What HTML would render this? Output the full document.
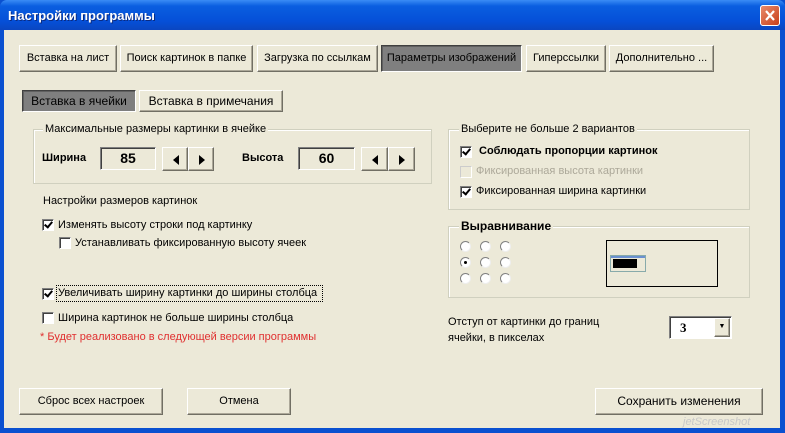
<!DOCTYPE html>
<html><head><meta charset="utf-8"><style>
*{box-sizing:border-box;margin:0;padding:0}
body{width:785px;height:433px;overflow:hidden;background:#0a50d0;font-family:"Liberation Sans","DejaVu Sans",sans-serif;font-size:11px;color:#000;position:relative}
.a{position:absolute;white-space:nowrap}
#title{left:0;top:0;width:785px;height:30px;background:linear-gradient(#3a8cf5 0%,#0a5ee0 20%,#0550d8 70%,#0a46c0 100%);border-radius:7px 7px 0 0}
#client{left:4px;top:30px;width:776px;height:398px;background:#ece9d8}
.btn{position:absolute;background:#ece9d8;border:1px solid;border-color:#fff #716f64 #716f64 #fff;box-shadow:inset -1px -1px 0 #aca899;text-align:center;font-size:11px}
.pr{background:#7f7f7f;border-color:#404040 #fff #fff #404040;box-shadow:inset 1px 1px 0 #606060}
.fr{position:absolute;border:1px solid #d0d0bf;box-shadow:1px 1px 0 #fff inset}
.cb{position:absolute;width:12px;height:12px;background:#fff;border:1px solid;border-color:#808080 #fff #fff #808080;box-shadow:inset 1px 1px 0 #404040}
.cb.k::after{content:"";position:absolute;left:3px;top:0px;width:3px;height:6px;border:solid #000;border-width:0 2px 2px 0;transform:rotate(40deg)}
.rd{position:absolute;width:11px;height:11px;border-radius:50%;background:#fff;border:1px solid;border-color:#808080 #eee #eee #808080}
.box{position:absolute;background:#ece9d8;border:1px solid;border-color:#808080 #fff #fff #808080;box-shadow:inset 1px 1px 0 #404040;font-weight:bold;font-size:14px;text-align:center;line-height:20px}
.tl,.tr{position:absolute;top:7px;width:0;height:0;border-top:5px solid transparent;border-bottom:5px solid transparent}
.tl{left:10px;border-right:6px solid #000}
.tr{left:10px;border-left:6px solid #000}
</style></head><body>
<div class="a" id="title"></div>
<div class="a" style="left:8px;top:8px;color:#fff;font-size:13px;font-weight:bold;text-shadow:1px 1px 0 #0a2a80">Настройки программы</div>
<div class="a" style="left:760px;top:5px;width:20px;height:21px;border:1px solid #fff;border-radius:3px;background:linear-gradient(135deg,#e88a6a,#c8401c)"><svg width="18" height="19" viewBox="0 0 18 19"><path d="M5 5L13 14M13 5L5 14" stroke="#fff" stroke-width="2.2"/></svg></div>
<div class="a" id="client"></div>

<div class="btn" style="left:19px;top:45px;width:98px;height:27px;line-height:25px">Вставка на лист</div>
<div class="btn" style="left:120px;top:45px;width:133px;height:27px;line-height:25px">Поиск картинок в папке</div>
<div class="btn" style="left:257px;top:45px;width:121px;height:27px;line-height:25px">Загрузка по ссылкам</div>
<div class="btn pr" style="left:381px;top:45px;width:141px;height:27px;line-height:25px">Параметры изображений</div>
<div class="btn" style="left:526px;top:45px;width:80px;height:27px;line-height:25px">Гиперссылки</div>
<div class="btn" style="left:609px;top:45px;width:105px;height:27px;line-height:25px">Дополнительно ...</div>

<div class="btn pr" style="left:22px;top:90px;width:114px;height:22px;line-height:20px;font-size:12px">Вставка в ячейки</div>
<div class="btn" style="left:139px;top:90px;width:144px;height:22px;line-height:20px;font-size:12px">Вставка в примечания</div>

<div class="fr" style="left:33px;top:129px;width:399px;height:55px"></div>
<div class="a" style="left:43px;top:123px;background:#ece9d8;padding:0 2px">Максимальные размеры картинки в ячейке</div>
<div class="a" style="left:42px;top:152px;font-weight:bold">Ширина</div>
<div class="box" style="left:100px;top:147px;width:56px;height:23px">85</div>
<div class="btn" style="left:162px;top:147px;width:26px;height:24px"><div class="tl"></div></div>
<div class="btn" style="left:188px;top:147px;width:26px;height:24px"><div class="tr"></div></div>
<div class="a" style="left:242px;top:152px;font-weight:bold">Высота</div>
<div class="box" style="left:298px;top:147px;width:57px;height:23px">60</div>
<div class="btn" style="left:361px;top:147px;width:27px;height:24px"><div class="tl"></div></div>
<div class="btn" style="left:388px;top:147px;width:27px;height:24px"><div class="tr"></div></div>

<div class="a" style="left:43px;top:195px">Настройки размеров картинок</div>
<div class="cb k" style="left:42px;top:219px"></div>
<div class="a" style="left:58px;top:219px">Изменять высоту строки под картинку</div>
<div class="cb" style="left:59px;top:237px"></div>
<div class="a" style="left:75px;top:237px">Устанавливать фиксированную высоту ячеек</div>
<div class="cb k" style="left:42px;top:288px"></div>
<div class="a" style="left:56px;top:285px;width:267px;height:17px;border:1px dotted #000;padding:1px 0 0 1px">Увеличивать ширину картинки до ширины столбца</div>
<div class="cb" style="left:42px;top:312px"></div>
<div class="a" style="left:58px;top:312px">Ширина картинок не больше ширины столбца</div>
<div class="a" style="left:40px;top:331px;color:#e03030">* Будет реализовано в следующей версии программы</div>

<div class="fr" style="left:448px;top:129px;width:302px;height:81px"></div>
<div class="a" style="left:459px;top:123px;background:#ece9d8;padding:0 2px">Выберите не больше 2 вариантов</div>
<div class="cb k" style="left:460px;top:146px"></div>
<div class="a" style="left:479px;top:145px;font-weight:bold">Соблюдать пропорции картинок</div>
<div class="cb" style="left:460px;top:166px;background:#ece9d8;box-shadow:none;border-color:#ccc #fff #fff #ccc"></div>
<div class="a" style="left:476px;top:165px;color:#aca899">Фиксированная высота картинки</div>
<div class="cb k" style="left:460px;top:186px"></div>
<div class="a" style="left:476px;top:185px">Фиксированная ширина картинки</div>

<div class="fr" style="left:448px;top:226px;width:302px;height:72px"></div>
<div class="a" style="left:459px;top:219px;background:#ece9d8;padding:0 2px;font-weight:bold;font-size:12px">Выравнивание</div>
<div class="rd" style="left:460px;top:241px"></div><div class="rd" style="left:480px;top:241px"></div><div class="rd" style="left:500px;top:241px"></div>
<div class="rd" style="left:460px;top:257px"><div style="position:absolute;left:3px;top:3px;width:3px;height:3px;background:#000;border-radius:50%"></div></div><div class="rd" style="left:480px;top:257px"></div><div class="rd" style="left:500px;top:257px"></div>
<div class="rd" style="left:460px;top:273px"></div><div class="rd" style="left:480px;top:273px"></div><div class="rd" style="left:500px;top:273px"></div>
<div class="a" style="left:606px;top:240px;width:112px;height:47px;border:1px solid #000"></div>
<div class="a" style="left:610px;top:255px;width:36px;height:17px;border:1px solid #8aa;background:#ece9d8"><div style="position:absolute;left:2px;top:3px;width:24px;height:9px;background:#000"></div><div style="position:absolute;left:0;top:0;width:34px;height:2px;background:#6a90d0"></div></div>

<div class="a" style="left:448px;top:314px;line-height:16px">Отступ от картинки до границ<br>ячейки, в пикселах</div>
<div class="a" style="left:669px;top:316px;width:63px;height:23px;background:#fff;border:1px solid;border-color:#808080 #fff #fff #808080;box-shadow:inset 1px 1px 0 #404040"><span style="position:absolute;left:10px;top:3px;font-weight:bold;font-size:13px;font-family:'Liberation Serif',serif">3</span><div class="btn" style="left:44px;top:1px;width:16px;height:19px;line-height:16px;font-size:7px">▼</div></div>

<div class="btn" style="left:19px;top:388px;width:144px;height:27px;line-height:25px">Сброс всех настроек</div>
<div class="btn" style="left:187px;top:388px;width:104px;height:27px;line-height:25px">Отмена</div>
<div class="btn" style="left:595px;top:388px;width:168px;height:27px;line-height:25px;font-size:12px">Сохранить изменения</div>
<div class="a" style="left:683px;top:416px;color:#c8c8c8;font-style:italic;font-size:11px">jetScreenshot</div>
</body></html>
